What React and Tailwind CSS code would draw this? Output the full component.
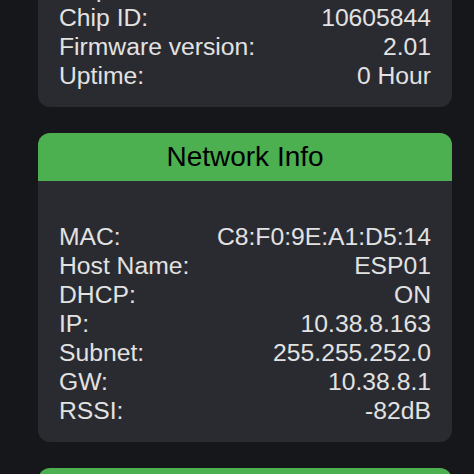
import React from 'react';

const systemRows = [
  ['Chip model:', 'ESP8266'],
  ['Chip ID:', '10605844'],
  ['Firmware version:', '2.01'],
  ['Uptime:', '0 Hour'],
];

const networkRows = [
  ['MAC:', 'C8:F0:9E:A1:D5:14'],
  ['Host Name:', 'ESP01'],
  ['DHCP:', 'ON'],
  ['IP:', '10.38.8.163'],
  ['Subnet:', '255.255.252.0'],
  ['GW:', '10.38.8.1'],
  ['RSSI:', '-82dB'],
];

const Rows = ({ rows }) => (
  <div className="flex flex-col">
    {rows.map(([label, value]) => (
      <div key={label} className="flex justify-between leading-[29px]">
        <span>{label}</span>
        <span>{value}</span>
      </div>
    ))}
  </div>
);

const App = () => {
  return (
    <div
      className="h-[474px] overflow-hidden bg-[#16171b] text-[24.7px] text-[#e2e2e2]"
      style={{ fontFamily: '"Liberation Sans", Arial, sans-serif' }}
    >
      <div className="ml-[38px] mr-[22px] -mt-[26px] flex flex-col gap-[26px]">
        <div className="rounded-b-[12px] bg-[#2a2b31] px-[21px] pb-[17px]">
          <Rows rows={systemRows} />
        </div>

        <div className="overflow-hidden rounded-[12px] bg-[#2a2b31]">
          <div className="h-[48px] bg-[#4caf50] text-center text-[28px] leading-[48px] text-black">
            Network Info
          </div>
          <div className="px-[21px] pt-[41px] pb-[17px]">
            <Rows rows={networkRows} />
          </div>
        </div>

        <div className="h-[48px] rounded-t-[12px] bg-[#4caf50]"></div>
      </div>
    </div>
  );
};

export default App;
